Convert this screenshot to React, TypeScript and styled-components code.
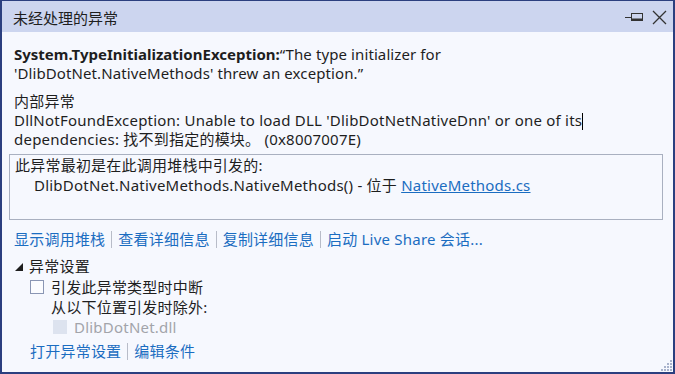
import React from "react";
import styled, { createGlobalStyle } from "styled-components";

const colors = {
  frame: "#2b3f7f",
  titleBar: "#ccd5ef",
  body: "#f6f8fe",
  text: "#1e1e1e",
  link: "#1b6dc1",
  linkSep: "#b8bcc8",
  boxBorder: "#a9b0c0",
  disabled: "#a2a4aa",
  checkBorder: "#8a96b4",
  checkDisabled: "#dde3ef",
};

const FONT = `"Noto Sans", "Noto Sans CJK SC", sans-serif`;

const GlobalStyle = createGlobalStyle`
  html, body {
    margin: 0;
    padding: 0;
    background: ${colors.body};
  }
`;

const links = ["显示调用堆栈", "查看详细信息", "复制详细信息", "启动 Live Share 会话..."];
const bottomLinks = ["打开异常设置", "编辑条件"];

function LinkList({ items }: { items: string[] }) {
  return (
    <>
      {items.map((l, i) => (
        <React.Fragment key={l}>
          {i > 0 && <Sep />}
          <Link>{l}</Link>
        </React.Fragment>
      ))}
    </>
  );
}

export default function App() {
  return (
    <>
      <GlobalStyle />
      <Window>
        <TitleBar>
          <Title>未经处理的异常</Title>
          <TitleButtons>
            <PinIcon />
            <CloseIcon />
          </TitleButtons>
        </TitleBar>
        <Body>
          <Message>
            <Bold>System.TypeInitializationException:</Bold>“The type initializer for
            <br />
            'DlibDotNet.NativeMethods' threw an exception.”
          </Message>
          <Inner>
            <div>内部异常</div>
            <div>
              DllNotFoundException: Unable to load DLL 'DlibDotNetNativeDnn' or one of its
              <Caret />
            </div>
            <div>dependencies: 找不到指定的模块。 (0x8007007E)</div>
          </Inner>
          <StackBox>
            <div>此异常最初是在此调用堆栈中引发的:</div>
            <StackLine>
              DlibDotNet.NativeMethods.NativeMethods() - 位于 <FileLink>NativeMethods.cs</FileLink>
            </StackLine>
          </StackBox>
          <LinkRow>
            <LinkList items={links} />
          </LinkRow>
          <Settings>
            <SectionHeader>
              <Triangle />
              异常设置
            </SectionHeader>
            <SettingsBody>
              <CheckRow>
                <CheckBox />
                <span>引发此异常类型时中断</span>
              </CheckRow>
              <SubLabel>从以下位置引发时除外:</SubLabel>
              <CheckRow indent>
                <CheckBox disabled />
                <DisabledText>DlibDotNet.dll</DisabledText>
              </CheckRow>
              <BottomLinks>
                <LinkList items={bottomLinks} />
              </BottomLinks>
            </SettingsBody>
          </Settings>
          <Grip />
        </Body>
      </Window>
    </>
  );
}

function PinIcon() {
  return (
    <svg width="18" height="12" viewBox="0 0 18 12">
      <path d="M0 6.5 H6" stroke="#333" strokeWidth="1" fill="none" />
      <rect x="6.5" y="2.5" width="11" height="7" stroke="#333" strokeWidth="1" fill="none" />
      <path d="M6.5 8.5 H17.5" stroke="#333" strokeWidth="2" fill="none" />
    </svg>
  );
}

function CloseIcon() {
  return (
    <svg width="15" height="15" viewBox="0 0 15 15">
      <path d="M1 1 L14 14 M14 1 L1 14" stroke="#333" strokeWidth="1.3" fill="none" />
    </svg>
  );
}

function Grip() {
  const dots = [
    [9, 0],
    [6, 3],
    [9, 3],
    [3, 6],
    [6, 6],
    [9, 6],
    [0, 9],
    [3, 9],
    [6, 9],
    [9, 9],
  ];
  return (
    <GripSvg width="11" height="11" viewBox="0 0 11 11">
      {dots.map(([x, y]) => (
        <rect key={`${x}-${y}`} x={x} y={y} width="2" height="2" fill="#a9b3cc" />
      ))}
    </GripSvg>
  );
}

const Window = styled.div`
  position: relative;
  width: 675px;
  height: 374px;
  box-sizing: border-box;
  border: 2px solid ${colors.frame};
  border-top-width: 1px;
  display: flex;
  flex-direction: column;
  background: ${colors.body};
  font-family: ${FONT};
  font-size: 15px;
  letter-spacing: 0.22px;
  color: ${colors.text};
`;

const TitleBar = styled.div`
  height: 31px;
  flex: none;
  display: flex;
  align-items: center;
  justify-content: space-between;
  padding: 0 6px 0 11px;
  background: ${colors.titleBar};
`;

const Title = styled.div`
  font-size: 15px;
  letter-spacing: 0;
  margin-top: 1px;
`;

const TitleButtons = styled.div`
  display: flex;
  align-items: center;
  gap: 9px;
  margin-top: 1px;
`;

const Body = styled.div`
  position: relative;
  flex: 1;
  display: flex;
  flex-direction: column;
  padding: 13px 10px 0 12px;
  line-height: 20px;
`;

const Message = styled.div`
  line-height: 19px;
  letter-spacing: 0.1px;
`;

const Bold = styled.span`
  font-weight: 700;
  font-size: 15px;
  letter-spacing: 0;
`;

const Inner = styled.div`
  margin-top: 9px;
  line-height: 19px;
`;

const Caret = styled.span`
  display: inline-block;
  width: 1px;
  height: 17px;
  background: #000;
  vertical-align: -4px;
`;

const StackBox = styled.div`
  margin: 5px 0 0 -5px;
  height: 66px;
  box-sizing: border-box;
  border: 1px solid ${colors.boxBorder};
  padding: 0 5px;
`;

const StackLine = styled.div`
  padding-left: 19px;
`;

const FileLink = styled.span`
  color: ${colors.link};
  text-decoration: underline;
`;

const LinkRow = styled.div`
  display: flex;
  align-items: center;
  margin-top: 9px;
`;

const BottomLinks = styled(LinkRow)`
  margin-top: 4px;
`;

const Link = styled.span`
  color: ${colors.link};
`;

const Sep = styled.span`
  width: 1px;
  height: 17px;
  margin: 0 6px;
  background: ${colors.linkSep};
`;

const Settings = styled.div`
  margin-top: 7px;
`;

const SectionHeader = styled.div`
  display: flex;
  align-items: center;
  gap: 6px;
`;

const Triangle = styled.span`
  width: 0;
  height: 0;
  margin: 1px 0 0 1px;
  border-left: 8px solid transparent;
  border-bottom: 8px solid #1e1e1e;
`;

const SettingsBody = styled.div`
  padding-left: 16px;
  display: flex;
  flex-direction: column;
  padding-top: 1px;
`;

const CheckRow = styled.div<{ indent?: boolean }>`
  display: flex;
  align-items: center;
  gap: 7px;
  padding-left: ${({ indent }) => (indent ? "23px" : "0")};
`;

const CheckBox = styled.span<{ disabled?: boolean }>`
  width: 14px;
  height: 14px;
  box-sizing: border-box;
  border: 1px solid ${({ disabled }) => (disabled ? colors.checkDisabled : colors.checkBorder)};
  background: ${({ disabled }) => (disabled ? colors.checkDisabled : "#fbfcff")};
`;

const SubLabel = styled.div`
  padding-left: 21px;
`;

const DisabledText = styled.span`
  color: ${colors.disabled};
`;

const GripSvg = styled.svg`
  position: absolute;
  right: 1px;
  bottom: 1px;
`;
